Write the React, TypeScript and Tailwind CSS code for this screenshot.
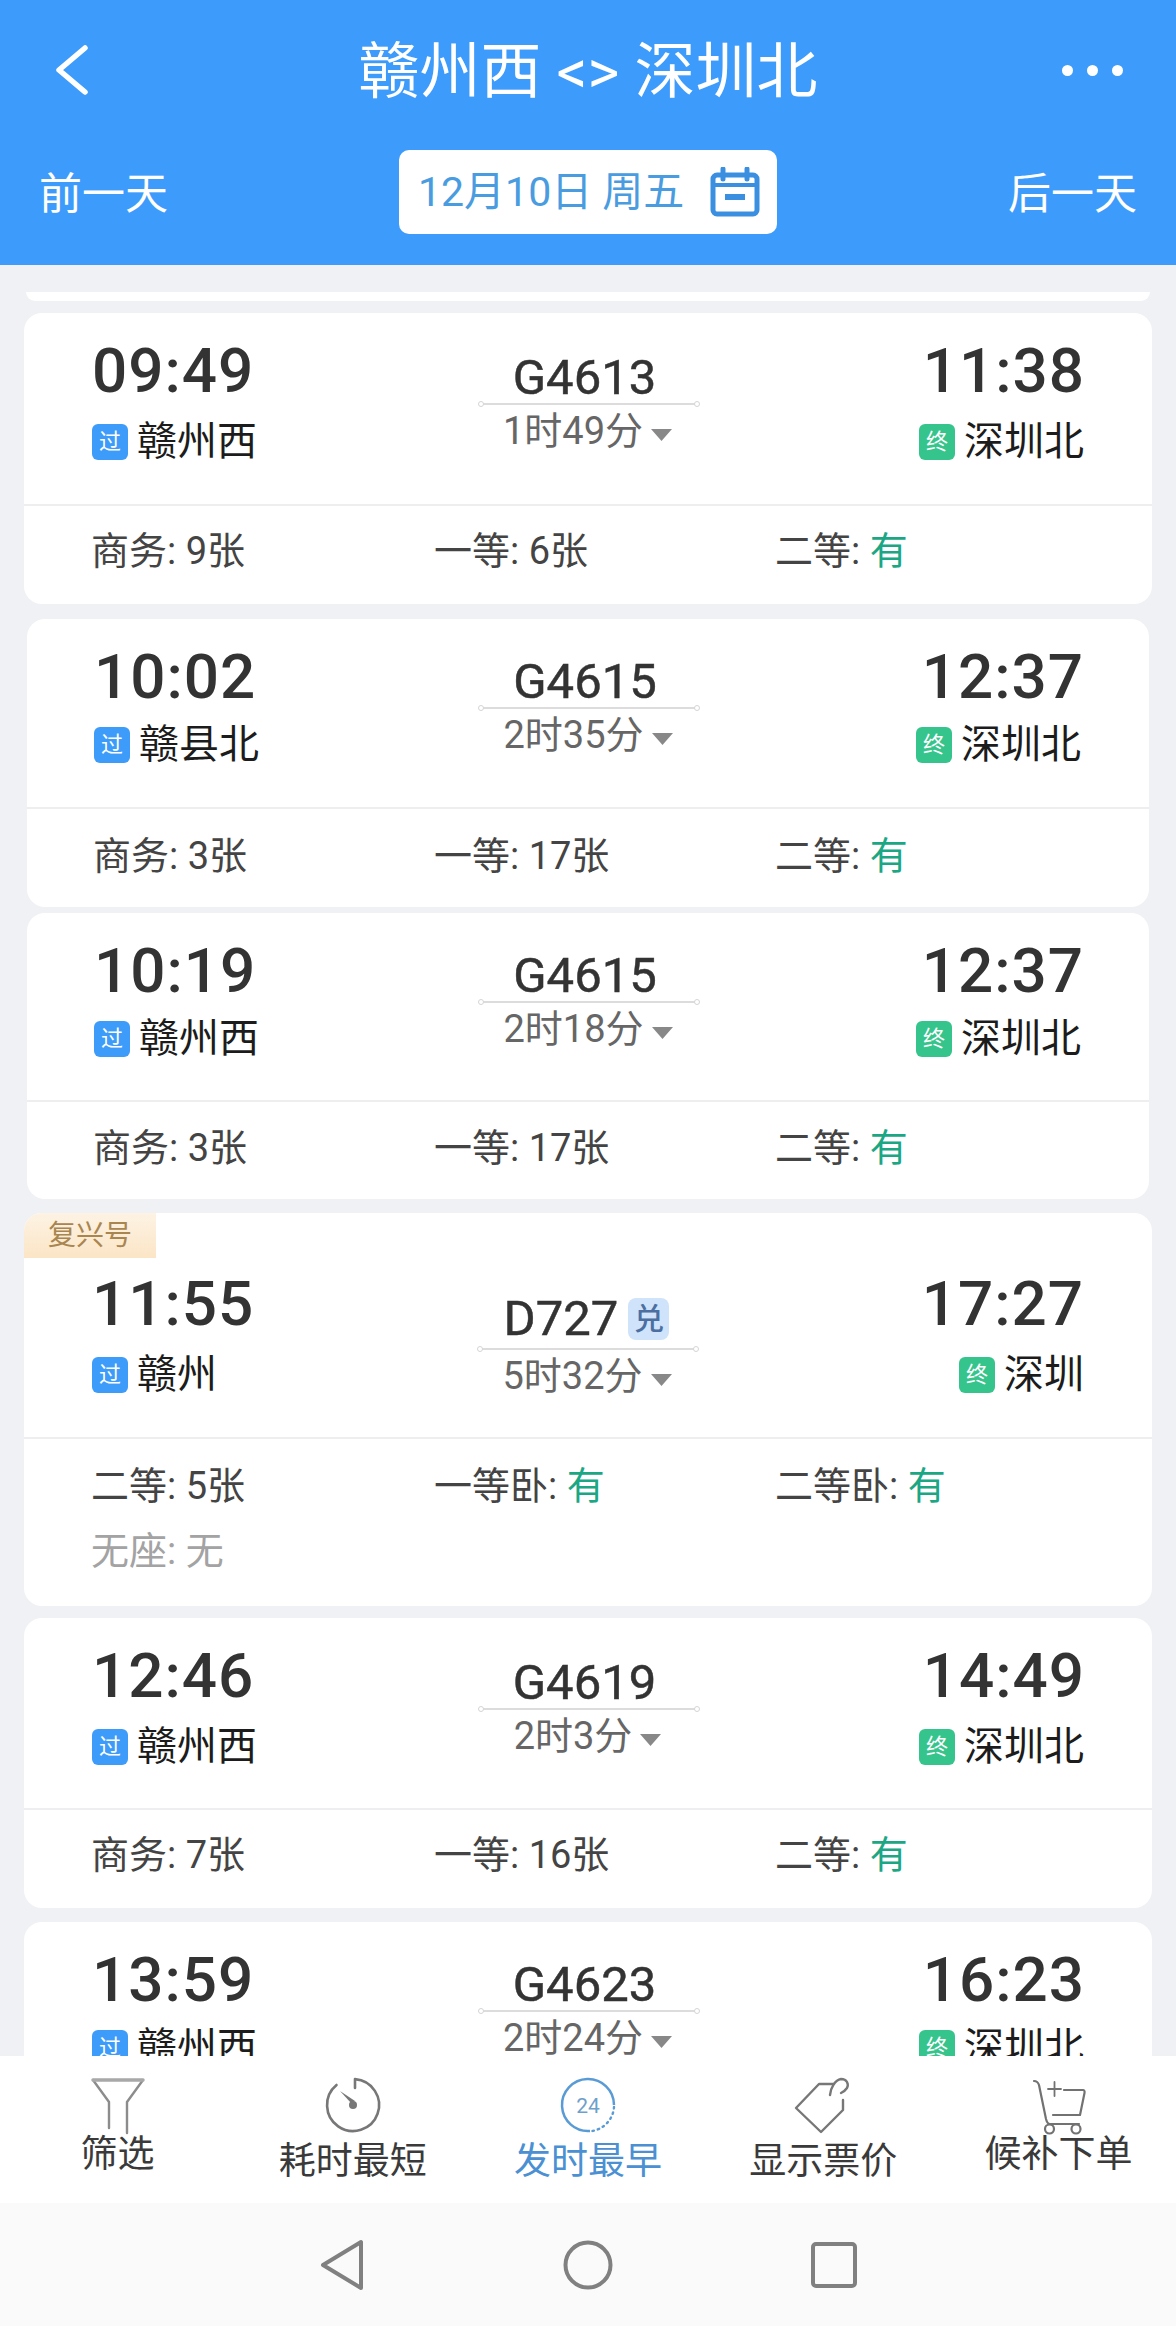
import React from "react";

const FONT = { fontFamily: '"Roboto","Noto Sans CJK SC",sans-serif' };

type Seat = { name: string; value: string; kind?: "ok" | "none" };
type CardProps = {
  dep: string;
  depSt: string;
  train: string;
  dur: string;
  arr: string;
  arrSt: string;
  seats: Seat[];
  box: string;
  top: string;
  seatBox?: string;
  center?: string;
  stationGap?: string;
  arrRight?: string;
  badge?: boolean;
  exch?: boolean;
};

function StationBadge({ label, green }: { label: string; green?: boolean }) {
  return (
    <span className={`flex h-[36px] w-[36px] shrink-0 items-center justify-center rounded-[6px] text-[22px] leading-none text-white ${green ? "bg-[#35c48b]" : "bg-[#3d9bf9]"}`}>
      {label}
    </span>
  );
}

function Card({ dep, depSt, train, dur, arr, arrSt, seats, box, top, seatBox = "", center = "pt-[14px]", stationGap = "mt-[15px]", arrRight = "", badge, exch }: CardProps) {
  return (
    <div className={`relative shrink-0 rounded-[18px] bg-white ${box}`}>
      {badge && (
        <div className="absolute left-0 top-0 flex h-[45px] w-[132px] items-center justify-center rounded-tl-[18px] bg-gradient-to-b from-[#fdf3e4] to-[#fbe5c6] text-[28px] leading-none text-[#a9854f]">
          复兴号
        </div>
      )}
      <div className={`grid grid-cols-[1fr_222px_1fr] border-b-2 border-[#eeeef0] ${top}`}>
        <div>
          <div className="h-[64px] text-[62px] font-medium leading-[64px] tracking-[1px] text-[#333]">{dep}</div>
          <div className={`flex h-[48px] items-center gap-[9px] text-[40px] leading-[48px] text-[#1c1c1c] ${stationGap}`}>
            <StationBadge label="过" />
            {depSt}
          </div>
        </div>
        <div className={`flex flex-col items-center ${center}`}>
          <div className={`flex h-[50px] items-center gap-[10px] text-[49px] leading-[50px] text-[#333] [-webkit-text-stroke:0.5px_#333] ${exch ? "-translate-y-[4px] pr-[3px]" : "pr-[8px]"}`}>
            {train}
            {exch && (
              <span className="flex h-[42px] w-[41px] items-center justify-center rounded-[8px] bg-[#cfe3fb] text-[30px] font-medium leading-none text-[#4a6fa0] [-webkit-text-stroke:0px]">兑</span>
            )}
          </div>
          <div className="relative h-[2px] w-[218px] bg-[#dcdcdc]">
            <span className="absolute left-[-2px] top-[-2px] h-[6px] w-[6px] rounded-full border border-[#d5d5d5] bg-white" />
            <span className="absolute right-[-2px] top-[-2px] h-[6px] w-[6px] rounded-full border border-[#d5d5d5] bg-white" />
          </div>
          <div className="mt-[4px] flex h-[44px] items-center gap-[8px] pr-[2px] text-[38px] leading-[44px] text-[#666]">
            {dur}
            <svg width="21" height="12" viewBox="0 0 21 12" className="mt-[8px]">
              <path d="M0 0H21L10.5 12Z" fill="#888" />
            </svg>
          </div>
        </div>
        <div className="flex flex-col items-end">
          <div className="h-[64px] text-[62px] font-medium leading-[64px] tracking-[1px] text-[#333]">{arr}</div>
          <div className={`flex h-[48px] items-center gap-[9px] text-[40px] leading-[48px] text-[#1c1c1c] ${stationGap} ${arrRight}`}>
            <StationBadge label="终" green />
            {arrSt}
          </div>
        </div>
      </div>
      <div className={`grid gap-y-[17px] ${seatBox}`}>
        {seats.map((s) => (
          <div key={s.name} className={`h-[48px] text-[38px] leading-[48px] ${s.kind === "none" ? "text-[#a3a3a3]" : "text-[#444]"}`}>
            {s.name}: <span className={s.kind === "ok" ? "text-[#1ba784]" : ""}>{s.value}</span>
          </div>
        ))}
      </div>
    </div>
  );
}

function Funnel() {
  return (
    <svg width="54" height="56" viewBox="0 0 54 56" fill="none" stroke="#8c8c8c" strokeWidth="2.4" strokeLinejoin="round" strokeLinecap="round" className="overflow-visible">
      <path d="M2 3L18 25V51" />
      <path d="M52 3L36 25V56" />
      <path d="M2 3H52" stroke="#a8a8a8" strokeWidth="3.4" />
    </svg>
  );
}

function Clock() {
  return (
    <svg width="56" height="56" viewBox="0 0 56 56" fill="none" stroke="#777" strokeWidth="2.6" className="overflow-visible">
      <path d="M30 11V2.1A26 26 0 1 1 11.5 8" strokeLinecap="round" strokeLinejoin="round" />
      <path d="M15 14L26 26L30 24Z" fill="#777" stroke="none" />
      <circle cx="28" cy="28" r="4" fill="#777" stroke="none" />
    </svg>
  );
}

function Clock24() {
  return (
    <svg width="56" height="56" viewBox="0 0 56 56" fill="none" className="overflow-visible">
      <path d="M54 28A26 26 0 1 0 30 54" stroke="#5a9bd5" strokeWidth="2.5" />
      <path d="M54 30A26 26 0 0 1 32 54" stroke="#5a9bd5" strokeWidth="2.4" strokeDasharray="1.5 4" strokeLinecap="round" />
      <text x="28" y="36" textAnchor="middle" fontSize="21" fill="#6f9fcb" fontFamily="Roboto, sans-serif">24</text>
    </svg>
  );
}

function Tag() {
  return (
    <svg width="56" height="56" viewBox="0 0 56 56" fill="none" stroke="#777" strokeWidth="2.4" strokeLinejoin="round" strokeLinecap="round" className="overflow-visible">
      <path d="M39 7H24L1 31L26 55L48 33V23" />
      <path d="M35 18C36 10 40 3 46 2C52 2 54 7 52 11C50 14 48 15 46 16" />
    </svg>
  );
}

function Cart() {
  return (
    <svg width="56" height="56" viewBox="0 0 56 56" fill="none" stroke="#727272" strokeWidth="2.2" strokeLinecap="round" strokeLinejoin="round" className="overflow-visible">
      <path d="M4 4C7 4 8 5 9 8L16 42C17 46 18 47 20 47H49" />
      <path d="M34 13H53C54 13 55 14 54.5 16L50 38H23" />
      <path d="M24.5 5V19M18 12H31" strokeWidth="1.8" />
      <circle cx="19.5" cy="52" r="4.5" />
      <circle cx="46" cy="52" r="4.5" />
    </svg>
  );
}

function BottomItem({ icon, label, active, up }: { icon: React.ReactNode; label: string; active?: boolean; up?: boolean }) {
  return (
    <div className="flex flex-col items-center">
      <div className="flex h-[56px] items-center justify-center">{icon}</div>
      <div className={`h-[44px] text-[37px] leading-[44px] ${up ? "mt-[0px]" : "mt-[7px]"} ${active ? "text-[#4a90d2]" : "text-[#3a3a3a]"}`}>{label}</div>
    </div>
  );
}

export default function App() {
  return (
    <div className="flex h-[2326px] w-[1176px] flex-col overflow-hidden bg-[#f0f1f5]" style={FONT}>
      <header className="h-[265px] shrink-0 bg-[#3d9bfb] text-white">
        <div className="relative flex h-[150px] items-start justify-center pt-[33px]">
          <svg width="36" height="50" viewBox="0 0 36 50" fill="none" stroke="white" strokeWidth="5.5" strokeLinecap="round" strokeLinejoin="round" className="absolute left-[54px] top-[45px]">
            <path d="M31 3L5 25L31 47" />
          </svg>
          <div className="text-[61px] leading-[78px]">赣州西 &lt;&gt; 深圳北</div>
          <div className="absolute left-[1062px] top-[65px] flex gap-[14px]">
            <span className="h-[11px] w-[11px] rounded-full bg-white" />
            <span className="h-[11px] w-[11px] rounded-full bg-white" />
            <span className="h-[11px] w-[11px] rounded-full bg-white" />
          </div>
        </div>
        <div className="flex items-start justify-between pl-[39px] pr-[39px]">
          <div className="pt-[2px] text-[43px] leading-[85px]">前一天</div>
          <div className="flex h-[84px] w-[378px] items-center rounded-[10px] bg-white pl-[19px] text-[41px] leading-none text-[#4a9ce0]">
            <span>12月10日 周五</span>
            <svg width="50" height="50" viewBox="0 0 50 50" fill="none" stroke="#3a8fe0" strokeWidth="5" className="ml-[26px]">
              <rect x="3" y="8" width="44" height="39" rx="4" />
              <path d="M3 18H47" strokeWidth="4" />
              <path d="M13 2V12M37 2V12" strokeLinecap="round" />
              <path d="M15 30H35" strokeWidth="6" />
            </svg>
          </div>
          <div className="pt-[2px] text-[43px] leading-[85px]">后一天</div>
        </div>
      </header>

      <main className="min-h-0 flex-1 overflow-hidden">
        <div className="mx-[26px] mt-[27px] h-[9px] rounded-b-[16px] bg-white" />
        <Card box="mx-[24px] mt-[12px] h-[291px]" top="h-[193px] pt-[26px] pl-[68px] pr-[67px]" seatBox="grid-cols-[343px_341px_342px] pl-[67px] pt-[21px]" arrRight="mr-[1px]"
          dep="09:49" depSt="赣州西" train="G4613" dur="1时49分" arr="11:38" arrSt="深圳北"
          seats={[{ name: "商务", value: "9张" }, { name: "一等", value: "6张" }, { name: "二等", value: "有", kind: "ok" }]} />
        <Card box="mx-[27px] mt-[15px] h-[288px]" top="h-[190px] pt-[26px] pl-[67px] pr-[65px]" seatBox="grid-cols-[341px_341px_342px] pl-[66px] pt-[23px]" center="pt-[12px]" stationGap="mt-[12px]" arrRight="mr-[3px]"
          dep="10:02" depSt="赣县北" train="G4615" dur="2时35分" arr="12:37" arrSt="深圳北"
          seats={[{ name: "商务", value: "3张" }, { name: "一等", value: "17张" }, { name: "二等", value: "有", kind: "ok" }]} />
        <Card box="mx-[27px] mt-[6px] h-[286px]" top="h-[189px] pt-[26px] pl-[67px] pr-[65px]" seatBox="grid-cols-[341px_341px_342px] pl-[66px] pt-[22px]" center="pt-[12px]" stationGap="mt-[12px]" arrRight="mr-[3px]"
          dep="10:19" depSt="赣州西" train="G4615" dur="2时18分" arr="12:37" arrSt="深圳北"
          seats={[{ name: "商务", value: "3张" }, { name: "一等", value: "17张" }, { name: "二等", value: "有", kind: "ok" }]} />
        <Card box="mx-[24px] mt-[14px] h-[393px]" top="h-[226px] pt-[59px] pl-[68px] pr-[68px]" seatBox="grid-cols-[343px_341px_342px] pl-[67px] pt-[23px]" center="pt-[26px]" badge exch
          dep="11:55" depSt="赣州" train="D727" dur="5时32分" arr="17:27" arrSt="深圳"
          seats={[{ name: "二等", value: "5张" }, { name: "一等卧", value: "有", kind: "ok" }, { name: "二等卧", value: "有", kind: "ok" }, { name: "无座", value: "无", kind: "none" }]} />
        <Card box="mx-[24px] mt-[12px] h-[290px]" top="h-[192px] pt-[26px] pl-[68px] pr-[67px]" seatBox="grid-cols-[343px_341px_342px] pl-[67px] pt-[21px]" arrRight="mr-[1px]"
          dep="12:46" depSt="赣州西" train="G4619" dur="2时3分" arr="14:49" arrSt="深圳北"
          seats={[{ name: "商务", value: "7张" }, { name: "一等", value: "16张" }, { name: "二等", value: "有", kind: "ok" }]} />
        <Card box="mx-[24px] mt-[14px] h-[290px]" top="h-[192px] pt-[26px] pl-[68px] pr-[67px]" center="pt-[12px]" stationGap="mt-[12px]" arrRight="mr-[1px]"
          dep="13:59" depSt="赣州西" train="G4623" dur="2时24分" arr="16:23" arrSt="深圳北"
          seats={[]} />
      </main>

      <nav className="grid h-[147px] shrink-0 grid-cols-5 bg-white pt-[21px]">
        <BottomItem icon={<Funnel />} label="筛选" up />
        <BottomItem icon={<Clock />} label="耗时最短" />
        <BottomItem icon={<Clock24 />} label="发时最早" active />
        <BottomItem icon={<Tag />} label="显示票价" />
        <BottomItem icon={<Cart />} label="候补下单" up />
      </nav>

      <div className="flex h-[123px] shrink-0 items-center justify-center bg-[#fafafa]">
        <div className="flex items-center gap-[198px] pt-[1px]">
          <svg width="46" height="52" viewBox="0 0 46 52" fill="none" stroke="#808080" strokeWidth="4" strokeLinejoin="round">
            <path d="M42 3V49L4 26Z" />
          </svg>
          <svg width="50" height="50" viewBox="0 0 50 50" fill="none" stroke="#808080" strokeWidth="4">
            <circle cx="25" cy="25" r="22.5" />
          </svg>
          <svg width="46" height="46" viewBox="0 0 46 46" fill="none" stroke="#808080" strokeWidth="4">
            <rect x="2" y="2" width="42" height="42" rx="3" />
          </svg>
        </div>
      </div>
    </div>
  );
}
